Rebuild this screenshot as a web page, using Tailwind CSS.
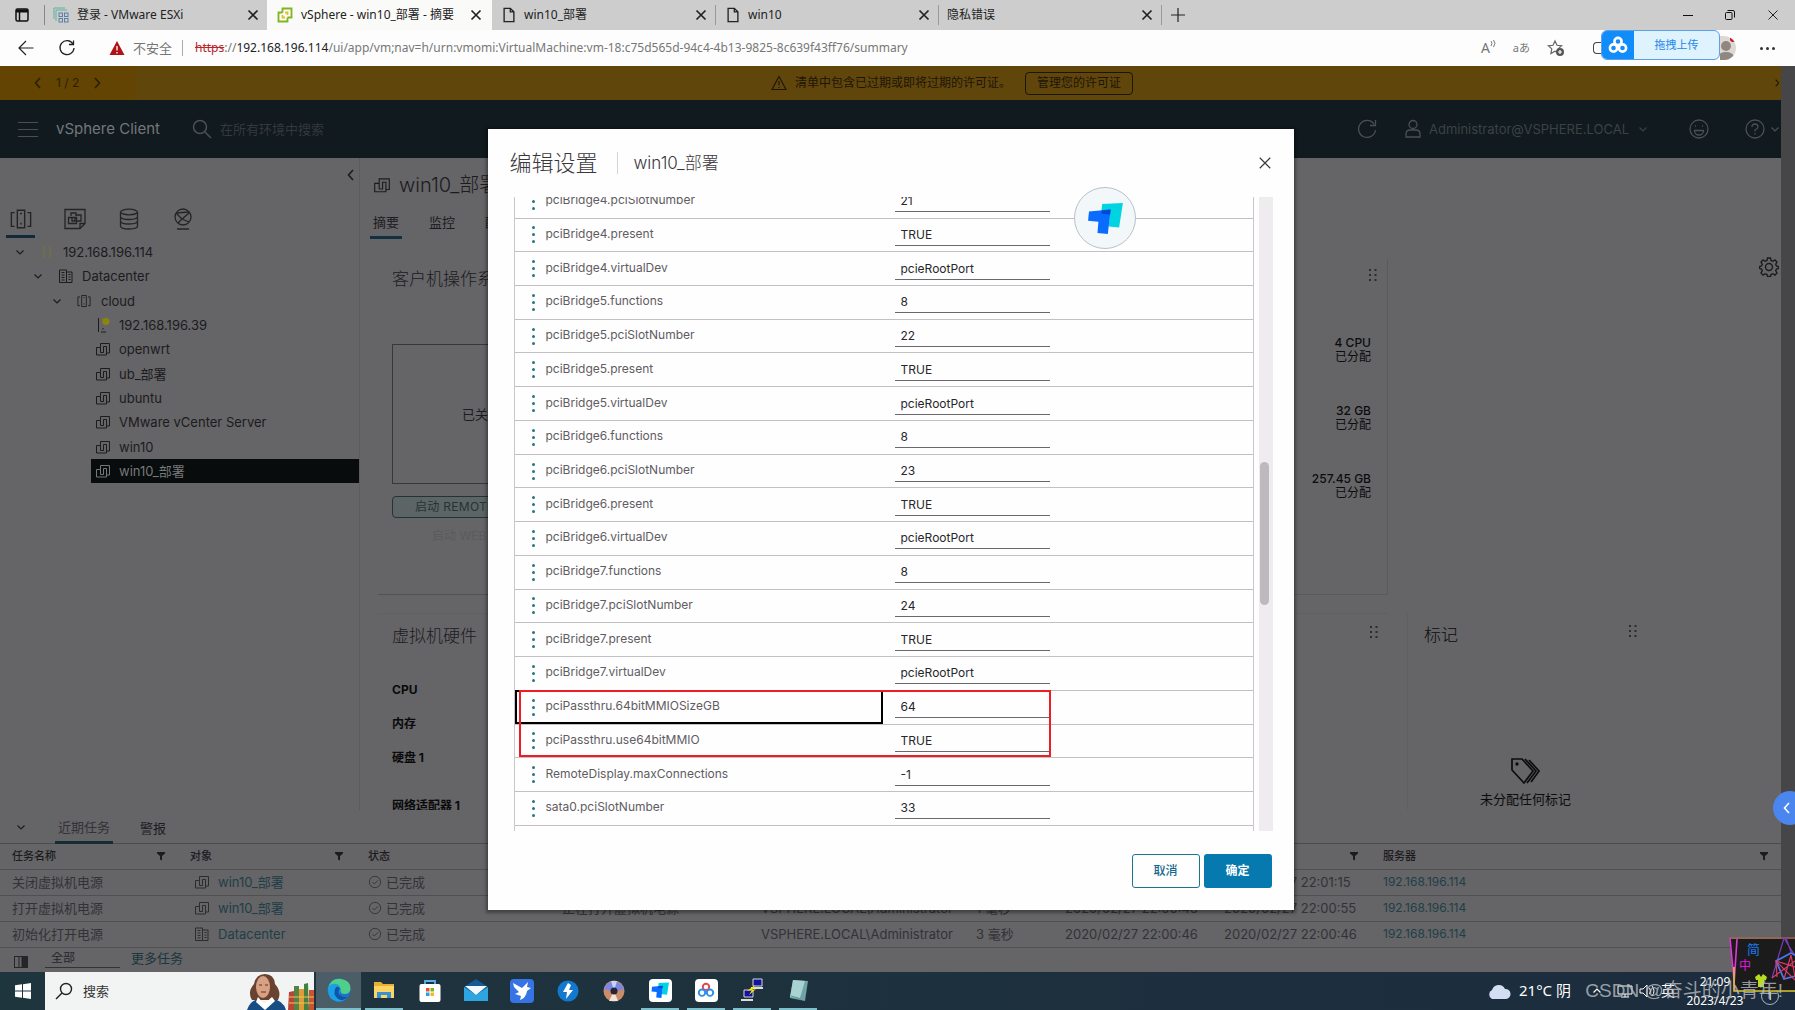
<!DOCTYPE html>
<html lang="zh-CN">
<head>
<meta charset="utf-8">
<title>vSphere - win10_部署 - 摘要</title>
<script src="https://cdn.jsdelivr.net/npm/@tailwindcss/browser@4"></script>
</head>
<body class="relative flex h-screen flex-col overflow-hidden bg-[#656467] font-['Inter','Noto_Sans_CJK_SC',sans-serif] text-[13px] leading-5 text-[#1c1b1e]">
<svg class="hidden" aria-hidden="true">
  <symbol id="vm" viewBox="0 0 16 16" fill="none" stroke="currentColor" stroke-width="1"><path d="M5.500 6.500V2.500h9v9.500h-3M5.500 6.500h-4v7.500h10V5.500H8.500v6h-3M5.500 6.500v5"/></symbol>
  <symbol id="dc" viewBox="0 0 16 16" fill="none" stroke="currentColor" stroke-width="1"><path d="M1.500 2h7v12.500h-7zM8.500 4H14v10.500H8.500M3.500 4.500h3M3.500 7h3M3.500 9.500h3M3.500 12h3M10.500 6.500h2M10.500 9h2M10.500 11.500h2"/></symbol>
  <symbol id="cluster" viewBox="0 0 24 24" fill="none" stroke="currentColor" stroke-width="1.5"><path d="M8 2.500h8v19H8zM5 5H1.500v15H5M19 5h3.500v15H19M11 6h2M12 16v2"/></symbol>
  <symbol id="chev" viewBox="0 0 12 12" fill="none" stroke="currentColor" stroke-width="1.2"><path d="M2.500 4.500L6 8l3.500-3.500"/></symbol>
  <symbol id="chevl" viewBox="0 0 12 12" fill="none" stroke="currentColor" stroke-width="1.6"><path d="M8 1L3.500 6 8 11"/></symbol>
  <symbol id="chevr" viewBox="0 0 12 12" fill="none" stroke="currentColor" stroke-width="1.6"><path d="M4 1l4.500 5L4 11"/></symbol>
  <symbol id="x" viewBox="0 0 12 12" fill="none" stroke="currentColor"><path d="M1.500 1.500l9 9M10.500 1.500l-9 9"/></symbol>
  <symbol id="page" viewBox="0 0 14 18" fill="none" stroke="currentColor" stroke-width="1.5"><path d="M1.500 1.500h7l4 4v11h-11zM8.500 1.500v4h4"/></symbol>
  <symbol id="filter" viewBox="0 0 10 10" fill="currentColor"><path d="M1 1h8v1.500L6 5v4.500L4 8.500V5L1 2.500z"/></symbol>
  <symbol id="ok" viewBox="0 0 16 16" fill="none" stroke="currentColor"><circle cx="8" cy="8" r="6.500"/><path d="M5 8l2.300 2.300L11.500 6"/></symbol>
  <symbol id="grip" viewBox="0 0 8 12" fill="currentColor"><path d="M0 0h2v2H0zM5.500 0h2v2h-2zM0 5h2v2H0zM5.500 5h2v2h-2zM0 10h2v2H0zM5.500 10h2v2h-2z"/></symbol>
  <symbol id="cloud3" viewBox="0 0 20 18" fill="none" stroke-width="2.600"><circle cx="10" cy="5.500" r="3.600"/><circle cx="5.500" cy="12" r="3.600"/><circle cx="14.500" cy="12" r="3.600"/></symbol>
  <symbol id="todesk" viewBox="0 0 38 34"><path fill="#00d4e0" d="M16 2l22-1-4 26-11-1 1-13-9-1z"/><path fill="#0a6cff" d="M2 10l23-2-3 26-11-1 1-12-11-1z"/><path fill="#0048d8" d="M15.500 8.800L25 8l-.6 5.200-9-.8z"/></symbol>
</svg>

<!-- Browser tab strip -->
<nav aria-label="标签页" class="flex h-[30px] shrink-0 items-center bg-[#cdcdcd] font-['Noto_Sans','Noto_Sans_CJK_SC',sans-serif] text-xs text-[#222]">
  <button aria-label="标签操作" class="flex w-11 justify-center"><svg class="h-3.5 w-3.5" viewBox="0 0 14 14" fill="none" stroke="#111" stroke-width="1.500"><rect x="1" y="1" width="12" height="12" rx="1.500"/><path d="M1 3h12" stroke-width="3"/><path d="M4.500 4v9"/></svg></button>
  <div class="flex h-full w-[223px] items-center">
    <span class="h-5 w-px bg-[#888]"></span>
    <svg class="ml-2 h-4 w-4" viewBox="0 0 16 16" fill="none"><path d="M1 12V1h11M3 14V3h11" stroke="#5fb39b"/><g stroke="#5c7fa6"><rect x="6" y="6" width="3.500" height="3.500"/><rect x="11.500" y="6" width="3.500" height="3.500"/><rect x="6" y="11.500" width="3.500" height="3.500"/><rect x="11.500" y="11.500" width="3.500" height="3.500"/></g></svg>
    <a href="#" class="ml-2 flex-1 whitespace-nowrap">登录 - VMware ESXi</a>
    <button aria-label="关闭" class="mr-2"><svg class="h-3 w-3" stroke-width="1.700"><use href="#x"/></svg></button>
  </div>
  <div class="flex h-full w-[225px] items-center bg-[#fafaf9]">
    <svg class="ml-2.5 h-4 w-4" viewBox="0 0 16 16" fill="none" stroke-width="1.800"><path d="M5.500 5.500v-4h9v9h-4" stroke="#7fb51d"/><path d="M5.500 5.500h-4v9h9v-4" stroke="#7fb51d"/><path d="M5.500 8v2.500H8M8 5.500h2.500V8" stroke="#e4bd2c"/></svg>
    <a href="#" aria-current="page" class="ml-2 flex-1 whitespace-nowrap">vSphere - win10_部署 - 摘要</a>
    <button aria-label="关闭" class="mr-2.5"><svg class="h-3 w-3" stroke-width="1.700"><use href="#x"/></svg></button>
  </div>
  <div class="flex h-full w-[223px] items-center">
    <svg class="ml-2.5 h-4 w-3.5"><use href="#page"/></svg>
    <a href="#" class="ml-2 flex-1 whitespace-nowrap">win10_部署</a>
    <button aria-label="关闭" class="mr-2"><svg class="h-3 w-3" stroke-width="1.700"><use href="#x"/></svg></button>
  </div>
  <div class="flex h-full w-[223px] items-center">
    <span class="h-5 w-px bg-[#999]"></span>
    <svg class="ml-2.5 h-4 w-3.5"><use href="#page"/></svg>
    <a href="#" class="ml-2 flex-1 whitespace-nowrap">win10</a>
    <button aria-label="关闭" class="mr-2"><svg class="h-3 w-3" stroke-width="1.700"><use href="#x"/></svg></button>
  </div>
  <div class="flex h-full w-[223px] items-center">
    <span class="h-5 w-px bg-[#999]"></span>
    <a href="#" class="ml-2 flex-1 whitespace-nowrap">隐私错误</a>
    <button aria-label="关闭" class="mr-2"><svg class="h-3 w-3" stroke-width="1.700"><use href="#x"/></svg></button>
  </div>
  <span class="h-5 w-px bg-[#999]"></span>
  <button aria-label="新建标签页" class="ml-2"><svg class="h-4 w-4" viewBox="0 0 16 16" stroke="#222" stroke-width="1.200"><path d="M8 1v14M1 8h14"/></svg></button>
  <div class="ml-auto flex items-center gap-8 pr-4">
    <button aria-label="最小化"><svg class="h-2.5 w-2.5" viewBox="0 0 10 10" stroke="#111"><path d="M0 5.500h10"/></svg></button>
    <button aria-label="还原"><svg class="h-2.5 w-2.5" viewBox="0 0 10 10" fill="none" stroke="#111"><rect x=".5" y="2.500" width="6.500" height="7" rx="1"/><path d="M2.500 .5H8Q9.500 .5 9.500 2v5.500"/></svg></button>
    <button aria-label="关闭窗口"><svg class="h-3 w-3"><use href="#x"/></svg></button>
  </div>
</nav>

<!-- Address bar -->
<div class="flex h-9 shrink-0 items-center bg-[#fdfdfd] font-['Noto_Sans','Noto_Sans_CJK_SC',sans-serif] text-[#777]">
  <button aria-label="返回" class="ml-[18px]"><svg class="h-4 w-4" viewBox="0 0 16 16" fill="none" stroke="#222" stroke-width="1.200"><path d="M15.500 8H1M8 1L1 8l7 7"/></svg></button>
  <button aria-label="刷新" class="ml-6"><svg class="h-[18px] w-[18px]" viewBox="0 0 18 18" fill="none" stroke="#222" stroke-width="1.300"><path d="M15 5A7 7 0 1 0 16 9M15.500 1.500V5.500H11"/></svg></button>
  <svg class="ml-[33px] h-4 w-4" viewBox="0 0 16 16"><path d="M8 1L15.500 15H.5z" fill="#b01216"/><path d="M8 6v4.500M8 12v1.500" stroke="#fff" stroke-width="1.300"/></svg>
  <span class="ml-2">不安全</span>
  <span class="ml-2.5 h-4 w-px bg-[#aaa]"></span>
  <div role="textbox" aria-label="地址" class="ml-3 flex-1 text-xs whitespace-nowrap"><span class="text-[#b8262b] line-through">https</span>://<span class="text-[#222]">192.168.196.114</span>/ui/app/vm;nav=h/urn:vmomi:VirtualMachine:vm-18:c75d565d-94c4-4b13-9825-8c639f43ff76/summary</div>
  <div class="flex items-center gap-[17px]">
    <button aria-label="大声朗读" class="flex items-start text-sm leading-4">A<svg class="h-2 w-1.5" viewBox="0 0 6 8" fill="none" stroke="#777"><path d="M1 1q2 2 0 5M3.500 0q3 3 0 7"/></svg></button>
    <button class="text-[11px]">aあ</button>
    <button aria-label="收藏"><svg class="h-[18px] w-[18px]" viewBox="0 0 18 18" fill="none" stroke="#666" stroke-width="1.200"><path d="M8 2l2 4.300 4.600.5-3.400 3.100.9 4.600L8 12.200 3.900 14.500l.9-4.600L1.400 6.800 6 6.300z"/><circle cx="13" cy="13" r="4" fill="#555" stroke="none"/><path d="M13 11v4M11 13h4" stroke="#fff"/></svg></button>
  </div>
  <div class="ml-7 flex items-center">
    <span class="h-3 w-2 rounded-l border border-r-0 border-[#444]"></span>
    <button class="-mt-1.5 flex h-[30px] overflow-hidden rounded-md border border-[#5f9ee8] bg-[#def3fd] text-[11px] text-[#1f87e6]">
      <span class="flex h-full w-8 items-center justify-center bg-[#108cfb]"><svg class="h-[18px] w-5" stroke="#fff"><use href="#cloud3"/></svg></span>
      <span class="flex h-full w-[85px] items-center justify-center">拖拽上传</span>
    </button>
    <span class="relative h-6 w-4 overflow-hidden rounded-r-xl bg-[#ddd8d3]"><svg class="h-6 w-4" viewBox="0 0 16 24" fill="#8f8780"><circle cx="6" cy="10" r="5"/><ellipse cx="6" cy="21" rx="8" ry="5"/></svg><i class="absolute top-0 right-0 h-1.5 w-1.5 rounded-full bg-[#c8102e]"></i></span>
  </div>
  <button aria-label="更多" class="mr-5 ml-6 flex gap-[3px]"><i class="h-[3px] w-[3px] rounded-full bg-[#333]"></i><i class="h-[3px] w-[3px] rounded-full bg-[#333]"></i><i class="h-[3px] w-[3px] rounded-full bg-[#333]"></i></button>
</div>

<!-- vSphere client -->
<div class="relative flex min-h-0 flex-1 border-r-[14px] border-[#464547]">
  <div class="flex min-w-0 flex-1 flex-col">
    <div class="flex h-[34px] shrink-0 items-center bg-[#61460c] text-xs text-[#1d1505]">
      <div class="flex w-[135px] items-center gap-3 self-stretch bg-[#634402] pl-8 text-[#2c1f05]"><svg class="h-3 w-3"><use href="#chevl"/></svg>1 / 2<svg class="h-3 w-3"><use href="#chevr"/></svg></div>
      <div class="flex flex-1 items-center justify-center pr-1">
        <svg class="h-4 w-4" viewBox="0 0 16 16" fill="none" stroke="currentColor" stroke-width="1.100"><path d="M8 1.500L15 14.500H1zM8 6v4.500M8 12v1"/></svg>
        <span class="ml-2">清单中包含已过期或即将过期的许可证。</span>
        <button class="ml-3.5 h-[23px] rounded-sm border border-[#1d1505] px-[11px]">管理您的许可证</button>
      </div>
      <svg class="h-3 w-2"><use href="#chevr"/></svg>
    </div>
    <header class="flex h-[58px] shrink-0 items-center bg-[#101a1f] text-[#4c5053]">
      <button aria-label="菜单" class="ml-[18px] flex flex-col gap-1.5"><i class="h-px w-5 bg-[#4b4f52]"></i><i class="h-px w-5 bg-[#4b4f52]"></i><i class="h-px w-5 bg-[#4b4f52]"></i></button>
      <span class="ml-[18px] text-[15px] text-[#74777a]">vSphere Client</span>
      <svg class="ml-8 h-5 w-5" viewBox="0 0 20 20" fill="none" stroke="currentColor" stroke-width="1.500"><circle cx="8" cy="8" r="6.500"/><path d="M13 13l6 6"/></svg>
      <input aria-label="搜索" placeholder="在所有环境中搜索" class="ml-2 w-40 bg-transparent text-[13px] placeholder:text-[#34393c]">
      <div class="ml-auto flex items-center">
        <button aria-label="刷新"><svg class="h-5 w-5" viewBox="0 0 20 20" fill="none" stroke="currentColor" stroke-width="1.300"><path d="M17 5a8.500 8.500 0 1 0 1.500 6M18.500 1v5.500H13"/></svg></button>
        <svg class="ml-7 h-5 w-4" viewBox="0 0 16 20" fill="none" stroke="currentColor" stroke-width="1.300"><circle cx="8" cy="5.500" r="4"/><path d="M1 18v-3q0-4 4-4h6q4 0 4 4v3z"/></svg>
        <button class="ml-2 flex items-center gap-2 text-[#3d4245]">Administrator@VSPHERE.LOCAL<svg class="h-3 w-3"><use href="#chev"/></svg></button>
        <button aria-label="反馈" class="ml-10"><svg class="h-5 w-5" viewBox="0 0 20 20" fill="none" stroke="currentColor" stroke-width="1.300"><circle cx="10" cy="10" r="9"/><path d="M6 7h1M13 7h1M5.500 11.500h9a4.500 4.500 0 0 1-9 0z"/></svg></button>
        <button aria-label="帮助" class="ml-9 flex items-center gap-1"><svg class="h-5 w-5" viewBox="0 0 20 20" fill="none" stroke="currentColor" stroke-width="1.300"><circle cx="10" cy="10" r="9"/><path d="M7 8q0-3 3-3t3 3q0 1.500-3 3v1.500M10 14v1.500"/></svg><svg class="h-3 w-3"><use href="#chev"/></svg></button>
      </div>
    </header>

    <div class="flex min-h-0 flex-1">
      <!-- Inventory -->
      <aside class="w-[360px] shrink-0 border-r border-[#5c5b5e]">
        <div class="flex h-11 justify-end pt-[11px] pr-0.5"><button aria-label="折叠" class="h-3"><svg class="h-3 w-3"><use href="#chevl"/></svg></button></div>
        <div class="flex h-9 gap-[25px] pl-1.5 text-[#242326]">
          <button aria-label="主机和集群" class="flex w-[29px] justify-center border-b-[3px] border-[#13293a] pt-1.5"><svg class="h-[22px] w-[22px]"><use href="#cluster"/></svg></button>
          <button aria-label="虚拟机" class="flex w-[29px] justify-center pt-1.5"><svg class="h-[22px] w-[22px]" viewBox="0 0 22 22" fill="none" stroke="currentColor" stroke-width="1.300"><path d="M1 1.500h20v14l-5 5H1zM21 15.500h-5v5M7 8V5h5v3M12 7h5v6h-4M4.500 9.500h8v6h-8zM8 9v4h3V9"/></svg></button>
          <button aria-label="存储" class="flex w-[29px] justify-center pt-1.5"><svg class="h-[22px] w-5" viewBox="0 0 20 22" fill="none" stroke="currentColor" stroke-width="1.300"><ellipse cx="10" cy="4" rx="8.500" ry="2.800"/><path d="M1.500 4v14q0 3 8.500 3t8.500-3V4M1.500 8.500q0 3 8.500 3t8.500-3M1.500 13q0 3 8.500 3t8.500-3"/></svg></button>
          <button aria-label="网络" class="flex w-[29px] justify-center pt-1.5"><svg class="h-[22px] w-5" viewBox="0 0 20 22" fill="none" stroke="currentColor" stroke-width="1.300"><circle cx="10" cy="9" r="8"/><path d="M3 5l6 6 7-6M9 11l-4 4M9 11l7 3M3 5l13-1M4 21h12"/></svg></button>
        </div>
        <ul class="mt-0.5 grid h-[243px] auto-rows-fr text-[13px]">
          <li class="flex items-center pl-3.5"><svg class="h-3 w-3"><use href="#chev"/></svg><i class="ml-[17px] h-3 w-2 border-x-2 border-[#6f6d4c]"></i><a href="#" class="ml-3">192.168.196.114</a></li>
          <li class="flex items-center pl-8"><svg class="h-3 w-3"><use href="#chev"/></svg><svg class="mr-2 ml-3.5 h-4 w-4"><use href="#dc"/></svg><a href="#">Datacenter</a></li>
          <li class="flex items-center pl-[51px]"><svg class="h-3 w-3"><use href="#chev"/></svg><svg class="mr-2.5 ml-3.5 h-3.5 w-3.5"><use href="#cluster"/></svg><a href="#">cloud</a></li>
          <li class="flex items-center pl-[95px]"><svg class="mr-2 h-4 w-4" viewBox="0 0 16 16" fill="none" stroke="currentColor"><path d="M3.500 1v14M6 15h5M8 11v1.500"/><path d="M7 1h4v6H7z" fill="#7a7318" stroke="none"/><circle cx="11" cy="4.500" r="3.500" fill="#8a8315" stroke="none"/></svg><a href="#">192.168.196.39</a></li>
          <li class="flex items-center pl-[95px]"><svg class="mr-2 h-4 w-4"><use href="#vm"/></svg><a href="#">openwrt</a></li>
          <li class="flex items-center pl-[95px]"><svg class="mr-2 h-4 w-4"><use href="#vm"/></svg><a href="#">ub_部署</a></li>
          <li class="flex items-center pl-[95px]"><svg class="mr-2 h-4 w-4"><use href="#vm"/></svg><a href="#">ubuntu</a></li>
          <li class="flex items-center pl-[95px]"><svg class="mr-2 h-4 w-4"><use href="#vm"/></svg><a href="#">VMware vCenter Server</a></li>
          <li class="flex items-center pl-[95px]"><svg class="mr-2 h-4 w-4"><use href="#vm"/></svg><a href="#">win10</a></li>
          <li class="ml-[91px] flex items-center bg-[#080c0d] pl-1 text-[#77787a]"><svg class="mr-2 h-4 w-4"><use href="#vm"/></svg><a href="#">win10_部署</a></li>
        </ul>
      </aside>

      <!-- VM summary -->
      <main class="min-w-0 flex-1 overflow-hidden pl-2.5">
        <h1 class="flex items-center pt-[11px] pl-[3px] text-xl leading-8 font-light"><svg class="mr-2 h-[18px] w-[18px]"><use href="#vm"/></svg>win10_部署</h1>
        <nav class="flex h-[38px] items-end">
          <a href="#" class="border-b-[3px] border-[#12303f] px-[3px] pb-1">摘要</a>
          <a href="#" class="ml-6 px-[3px] pb-[7px]">监控</a>
          <a href="#" class="ml-6 px-[3px] pb-[7px]">配置</a>
        </nav>
        <div class="flex justify-end pt-[18px] pr-0.5"><button aria-label="设置"><svg class="h-5 w-5" viewBox="0 0 20 20" fill="none" stroke="currentColor" stroke-width="1.400"><circle cx="10" cy="10" r="3.500"/><path d="M8.500 1h3l.5 2.500 1.800.8L16 3l2 2-1.300 2.200.8 1.800 2 .5v2l-2 .5-.8 1.800L18 16l-2 2-2.200-1.300-1.800.8-.5 2h-3l-.5-2-1.800-.8L4 18l-2-2 1.300-2.200-.8-1.800-2-.5v-2l2-.5.8-1.800L2 5l2-2 2.200 1.300L8 3.500z"/></svg></button></div>
        <div class="-mt-[18px] grid grid-cols-[minmax(0,1fr)_240px] gap-x-[19px] gap-y-[18px] pr-[134px] pl-2">
          <div class="grid h-[336px] grid-cols-2 gap-5">
            <section class="border-b border-[#525153] px-3.5 pt-2">
              <h2 class="text-[17px] leading-6 font-light">客户机操作系统</h2>
              <div class="mt-[53px] flex h-[140px] items-center border border-[#38373a] pl-[69px]">已关闭电源</div>
              <button class="mt-3 h-[22px] rounded-sm border border-[#213537] bg-[#5d6465] px-[22px] text-xs tracking-wide text-[#213537]">启动 REMOTE CONSOLE</button>
              <p class="mt-2.5 pl-10 text-xs text-[#5b5b5d]">启动 WEB CONSOLE</p>
            </section>
            <section class="border-r border-b border-[#5a595b] pt-2.5 pr-2.5 text-right text-[#0c0c0d]">
              <svg class="ml-auto h-3 w-2 text-[#2c2b2e]"><use href="#grip"/></svg>
              <dl class="pt-[55px] pr-1.5 text-xs leading-[14px]">
                <div class="mb-10"><dt class="font-medium">4 CPU</dt><dd>已分配</dd></div>
                <div class="mb-10"><dt class="font-medium">32 GB</dt><dd>已分配</dd></div>
                <div><dt class="font-medium">257.45 GB</dt><dd>已分配</dd></div>
              </dl>
            </section>
          </div>
          <div></div>
          <section class="h-[200px] border-t border-[#606063] pt-2.5 pr-2.5 pl-3.5">
            <div class="flex justify-between"><h2 class="text-[17px] leading-6 font-light">虚拟机硬件</h2><svg class="mt-0.5 h-3 w-2 text-[#2c2b2e]"><use href="#grip"/></svg></div>
            <ul class="mt-[35px] text-xs leading-[14px] font-bold text-[#0a0a0b]"><li class="mb-5">CPU</li><li class="mb-5">内存</li><li class="mb-[34px]">硬盘 1</li><li>网络适配器 1</li></ul>
          </section>
          <section class="h-[200px] border-l border-[#606063] pt-2.5 pr-2.5 pl-4 text-[#0c0c0d]">
            <div class="flex justify-between"><h2 class="text-[17px] leading-6 font-light">标记</h2><svg class="mt-0.5 h-3 w-2 text-[#2c2b2e]"><use href="#grip"/></svg></div>
            <div class="mt-[110px] mr-2.5 flex flex-col items-center gap-1"><svg class="h-7 w-8" viewBox="0 0 32 28" fill="none" stroke="currentColor" stroke-width="1.700"><path d="M2 2h10l11 12-9 12L2 13zM15 2l11 12-9 12M19 3l10 11-8 11"/><circle cx="7" cy="7" r=".8"/></svg>未分配任何标记</div>
          </section>
        </div>
      </main>
    </div>

    <!-- Recent tasks -->
    <section class="h-[162px] shrink-0 bg-[#656467]">
      <div class="flex h-[34px] items-center border-b border-[#4b4a4c] pl-[15px]">
        <button aria-label="收起"><svg class="h-3 w-3" stroke-width="1.800"><use href="#chev"/></svg></button>
        <button class="ml-7 h-[34px] border-b-[3px] border-[#152c35] px-[3px] pt-1 text-[#333236]">近期任务</button>
        <button class="ml-[27px] pt-0.5">警报</button>
      </div>
      <table class="w-full table-fixed text-left text-[13px] text-[#333236]">
        <colgroup><col class="w-[178px]"><col class="w-[178px]"><col class="w-[194px]"><col class="w-[199px]"><col class="w-[215px]"><col class="w-[89px]"><col class="w-[159px]"><col class="w-[159px]"><col></colgroup>
        <thead class="text-[11px] text-[#1c1b1e]"><tr id="task-head" class="h-[25px] border-b border-[#504f52]"></tr></thead>
        <tbody id="tasks"></tbody>
      </table>
      <div class="flex items-start pt-px pl-3.5 text-[#26252a]">
        <svg class="mt-1.5 h-3.5 w-3.5" viewBox="0 0 14 14" fill="none" stroke="currentColor"><rect x=".5" y="1.500" width="13" height="11"/><path d="M5 1.500v11"/><path d="M8 2h5v10H8z" fill="currentColor"/></svg>
        <select aria-label="任务范围" class="ml-[17px] h-[19px] w-[75px] appearance-none border-b border-[#333] pl-1.5 text-xs leading-3"><option>全部</option></select>
        <a href="#" class="ml-[11px] leading-[18px] text-[#1a373d]">更多任务</a>
      </div>
    </section>
  </div>
</div>

<!-- Taskbar -->
<footer class="relative flex h-[38px] shrink-0 items-stretch bg-linear-to-r from-[#1f353d] to-[#1c2c3e] font-['Noto_Sans','Noto_Sans_CJK_SC',sans-serif] text-white">
  <button aria-label="开始" class="flex w-[45px] items-center justify-center"><svg class="h-4 w-4" viewBox="0 0 16 16" fill="#fff"><path d="M0 2.300l7-1v6.200H0zM8 1.200L16 0v7.500H8zM0 8.500h7v6.200l-7-1zM8 8.500h8V16l-8-1.200z"/></svg></button>
  <label class="flex w-[269px] items-center overflow-hidden bg-[#f2f3f3] pl-2.5">
    <svg class="h-[18px] w-[18px] shrink-0" viewBox="0 0 18 18" fill="none" stroke="#222" stroke-width="1.400"><circle cx="11" cy="7" r="5.500"/><path d="M7 11l-6 6"/></svg>
    <input type="search" placeholder="搜索" class="ml-2 min-w-0 flex-1 bg-transparent pl-0.5 placeholder:text-[#333]">
    <svg class="h-[38px] w-[68px] shrink-0" viewBox="0 0 68 38"><path d="M8 12Q10 2 19 2t10 10q7 8 3 16H6Q1 20 8 12z" fill="#694230"/><ellipse cx="17" cy="15" rx="7" ry="11" fill="#d9a184"/><path d="M13 13h3M19 13h3M15 20h5" stroke="#5d3526"/><path d="M1 38q3-10 12-11l5 6 8-6q11 1 14 11z" fill="#164d84"/><path d="M12 25l6 7 8-7 3 4-10 9-9-8z" fill="#fff"/><path d="M43 20l5-1 1 19h-7z" fill="#ba4435"/><path d="M48 14h5v24h-5z" fill="#538446"/><path d="M53 17h5v21h-5z" fill="#e09b39"/><path d="M58 12l4-1 1 27h-5z" fill="#46803e"/><path d="M63 18h5v20h-5z" fill="#cb5430"/><path d="M43 25h25M43 31h25" stroke="#f0c25a"/></svg>
  </label>
  <div class="ml-0.5 flex">
    <button aria-label="Edge" class="flex w-[45px] items-center justify-center border-b-2 border-[#7dc0cc] bg-[#4b5d67]"><svg class="h-6 w-6" viewBox="0 0 24 24"><circle cx="12" cy="12" r="11.500" fill="#1b74c9"/><path d="M1 10Q4 0 13 .7 24 2 23.500 11q-.5 5-6 5-4 0-4-3 1-5-5-5.500Q4 7 1 10z" fill="#4fd08a"/><path d="M1 10Q4 5 9 6q5 1 4 6-2 4 2 7 3 2 6-.5-4 6-11 5Q0 21 1 10z" fill="#1c9fe3"/><path d="M9 9q-4 7 2 12 5 3 10-2-5 1-8-2-3-3 0-6-1-3-4-2z" fill="#0d55a8"/></svg></button>
    <button aria-label="文件资源管理器" class="mx-1 flex w-[38px] items-center justify-center border-b-2 border-[#7dc0cc]"><svg class="h-5 w-5" viewBox="0 0 20 20"><path d="M0 2h7l2 2h11v14H0z" fill="#e8b230"/><path d="M0 6h20v12H0z" fill="#fbd667"/><path d="M3 18v-6h14v6h-4v-3H7v3z" fill="#3b90d4"/></svg></button>
    <button aria-label="Microsoft Store" class="mx-1 flex w-[38px] items-center justify-center"><svg class="h-6 w-6" viewBox="0 0 24 24"><path d="M7 6V2h10v4" fill="none" stroke="#54b5e8" stroke-width="1.800"/><rect x="1.500" y="5" width="21" height="18" rx="2" fill="#fff"/><path d="M8 9h3.500v3.500H8z" fill="#e8502d"/><path d="M12.500 9H16v3.500h-3.500z" fill="#78b526"/><path d="M8 13.500h3.500V17H8z" fill="#27a2e3"/><path d="M12.500 13.500H16V17h-3.500z" fill="#f4ba24"/></svg></button>
    <button aria-label="邮件" class="mx-1 flex w-[38px] items-center justify-center"><svg class="h-6 w-6" viewBox="0 0 24 24"><path d="M0 8l12-8 12 8v14H0z" fill="#155a96"/><path d="M0 8l12 8L24 8v14H0z" fill="#2da5e1"/><path d="M1 7h22l-11 9z" fill="#f2f8fc"/></svg></button>
    <button aria-label="雷鸟" class="mx-1 flex w-[38px] items-center justify-center"><svg class="h-6 w-6" viewBox="0 0 24 24"><rect width="24" height="24" rx="4" fill="#3674e6"/><path d="M3 4l9 5 6-6-1 5 4 1-4 3q-1 7-7 9l1-4-6-2 4-2-5-5z" fill="#fff"/></svg></button>
    <button aria-label="闪电" class="mx-1 flex w-[38px] items-center justify-center"><svg class="h-[22px] w-[22px]" viewBox="0 0 22 22"><circle cx="11" cy="11" r="10.500" fill="#1378cf"/><path d="M11 3L6 12h4l-1 7 7-9h-4l2-5z" fill="#fff"/></svg></button>
    <button aria-label="浏览器" class="mx-1 flex w-[38px] items-center justify-center"><svg class="h-[22px] w-[22px]" viewBox="0 0 22 22"><circle cx="11" cy="11" r="10.500" fill="#c98d67"/><path d="M1 9a10.500 10.500 0 0 1 20 0l-10 3z" fill="#7b86e5"/><path d="M8 1h6l-3 10z" fill="#c7d3fb"/><path d="M11 11l-5 10h9z" fill="#f2e4dc"/><circle cx="11" cy="11" r="3.500" fill="#2a2430"/></svg></button>
    <button aria-label="ToDesk" class="mx-1 flex w-[38px] items-center justify-center border-b-2 border-[#7dc0cc]"><span class="flex h-[23px] w-[23px] items-center justify-center rounded bg-white"><svg class="h-4 w-[18px]"><use href="#todesk"/></svg></span></button>
    <button aria-label="百度网盘" class="mx-1 flex w-[38px] items-center justify-center border-b-2 border-[#7dc0cc]"><span class="flex h-[23px] w-[23px] items-center justify-center rounded bg-white"><svg class="h-4 w-[18px]" viewBox="0 0 20 18" fill="none" stroke-width="2.200"><circle cx="10" cy="5.500" r="3.600" stroke="#e2474e"/><circle cx="5.500" cy="12" r="3.600" stroke="#2c8ff0"/><circle cx="14.500" cy="12" r="3.600" stroke="#2c8ff0"/></svg></span></button>
    <button aria-label="PuTTY" class="mx-1 flex w-[38px] items-center justify-center border-b-2 border-[#7dc0cc]"><svg class="h-6 w-6" viewBox="0 0 24 24"><path d="M13 1h9v7h-9zM4 12h9v7H4z" fill="#13139b" stroke="#d8d8d8"/><path d="M11 9h12v2H11zM1 21h12v2H1z" fill="#ddd"/><path d="M15 7l-8 6 5-1-3 5 7-6-4 1z" fill="#ffe600"/></svg></button>
    <button aria-label="记事本" class="mx-1 flex w-[38px] items-center justify-center border-b-2 border-[#7dc0cc]"><svg class="h-6 w-6" viewBox="0 0 24 24"><path d="M7 2l15 1-3 20-15-3z" fill="#6fa3a5"/><path d="M7 2l12 1-5 17-10-1z" fill="#a9d2d2"/><path d="M5 18l10 3" stroke="#5d9293"/></svg></button>
  </div>
  <div class="mr-12 ml-auto flex items-center text-sm">
    <svg class="h-4 w-6" viewBox="0 0 24 16" fill="#d3def5"><path d="M5 16a5 5 0 0 1 0-9A7 7 0 0 1 18 6a5 5 0 0 1 1 10z"/></svg>
    <span class="ml-2 text-[15px] whitespace-nowrap">21°C 阴</span>
    <svg class="ml-5 h-3 w-3 rotate-180"><use href="#chev"/></svg>
    <svg class="ml-3.5 h-4 w-4" viewBox="0 0 16 16" fill="none" stroke="#fff"><path d="M1 3h14v8H1zM4 14h8M8 11v3"/></svg>
    <svg class="ml-1.5 h-4 w-4" viewBox="0 0 16 16" fill="none" stroke="#fff"><path d="M1 6h3l4-4v12l-4-4H1zM10.500 5q2 3 0 6M13 3q4 5 0 10"/></svg>
    <span class="ml-1.5">英</span>
    <time class="ml-2 w-16 text-center text-xs leading-[19px]">21:09<br>2023/4/23</time>
  </div>
  <div class="absolute top-[15px] right-4 flex h-[18px] w-[18px] items-center justify-center rounded-full border border-[#aab4bd] text-[11px]">1</div>
</footer>

<!-- Input method widget -->
<div class="absolute right-0 bottom-[18px] h-[55px] w-[66px] overflow-hidden">
  <svg class="absolute inset-0 h-[55px] w-[66px]" viewBox="0 0 66 55" fill="none" stroke-width="1.200"><path d="M1 2h65v52H5z" fill="#1b1b1c"/><path d="M1 1l65 0" stroke="#c06a4c"/><path d="M1 1l5 53M8 2L5 48" stroke="#e137d4" stroke-width="1.600"/><path d="M5 30v24h61" stroke="#d8c92e" stroke-width="1.600"/><path d="M55 1L43 41M55 1l11 18M57 1l5 14" stroke="#7b3db4"/><path d="M47 24l15-8 4 2M47 24l8 18 11-3" stroke="#4b77ee" stroke-width="1.800"/><path d="M47 24l19 6M55 42l7-24 4 22M43 41l23-17M48 40l-1-16 19 19" stroke="#d93b68"/></svg>
  <span class="absolute top-0.5 left-[18px] text-[13px] leading-5 text-[#1e7bf0]">简</span>
  <span class="absolute top-[19px] left-2.5 text-[12px] leading-5 text-[#e416e0]">中</span>
  <svg class="absolute top-9 left-6 h-4 w-4" viewBox="0 0 16 16" fill="#b6dd1f"><path d="M2 4l4-3 2 3 2-3 4 3-1 3h-2v7H5V7H3z"/></svg>
</div>
<div class="pointer-events-none absolute right-3 bottom-[5px] font-['Liberation_Sans','Noto_Sans_CJK_SC',sans-serif] text-[19px] leading-7 whitespace-nowrap text-[#b9bdc1]/80">CSDN @奋斗的小青年!</div>
<button aria-label="展开侧栏" class="absolute top-[791px] -right-3 flex h-[34px] w-[34px] items-center rounded-full bg-[#4a86ee] pl-2 text-white"><svg class="h-3 w-3"><use href="#chevl"/></svg></button>

<!-- Edit settings dialog -->
<div class="pointer-events-none absolute inset-0 flex items-start justify-center pt-[129px] pr-[14px]">
  <div role="dialog" aria-labelledby="dlg-title" class="pointer-events-auto relative flex h-[781px] w-[806px] flex-col bg-[#fefefe] shadow-[0_1px_3px_2px_rgba(0,0,0,0.35)]">
    <div class="flex h-[68px] shrink-0 items-center pr-[22px] pl-[22px] text-[#3b383d]">
      <h2 id="dlg-title" class="text-[22px] font-light">编辑设置</h2>
      <span class="ml-[19px] h-[22px] w-px bg-[#d5d3d6]"></span>
      <span class="ml-4 flex-1 text-[17px] font-light">win10_部署</span>
      <button aria-label="关闭"><svg class="h-[14px] w-[14px]"><use href="#x"/></svg></button>
    </div>
    <div class="flex h-[634px] shrink-0 pr-[21px] pl-[26px]">
      <div class="relative min-w-0 flex-1 overflow-hidden border-x border-[#c9c7cb]">
        <table class="-mt-3 h-[641px] w-full table-fixed border-collapse text-xs leading-[18px] text-[#5f5c62]">
          <colgroup><col class="w-[368px]"><col></colgroup>
          <tbody id="params"></tbody>
        </table>
      </div>
      <div class="ml-[5px] w-[14px] bg-[#eeecef] pt-[265px] pl-px"><div class="h-[143px] w-[9px] rounded-full bg-[#bcbabc]"></div></div>
    </div>
    <div class="flex justify-end gap-1 pt-[23px] pr-[22px]">
      <button class="h-[34px] w-[68px] rounded-[3px] border border-[#1b7590] text-xs font-medium text-[#14698a]">取消</button>
      <button class="h-[34px] w-[68px] rounded-[3px] bg-[#0679ae] text-xs font-bold text-white">确定</button>
    </div>
    <!-- Highlight drawn round the two MMIO settings -->
    <div class="pointer-events-none absolute top-[561px] left-[31px] h-[67px] w-[532px] border-2 border-[#ee1c25]"></div>
    <div class="absolute top-[58px] left-[586px] flex h-[62px] w-[62px] items-center justify-center rounded-full border border-[#b9c1c6] bg-[#f2f7fa]"><svg class="h-8 w-9"><use href="#todesk"/></svg></div>
  </div>
</div>

<script>
const params = [
  ['pciBridge4.pciSlotNumber', '21'], ['pciBridge4.present', 'TRUE'], ['pciBridge4.virtualDev', 'pcieRootPort'],
  ['pciBridge5.functions', '8'], ['pciBridge5.pciSlotNumber', '22'], ['pciBridge5.present', 'TRUE'], ['pciBridge5.virtualDev', 'pcieRootPort'],
  ['pciBridge6.functions', '8'], ['pciBridge6.pciSlotNumber', '23'], ['pciBridge6.present', 'TRUE'], ['pciBridge6.virtualDev', 'pcieRootPort'],
  ['pciBridge7.functions', '8'], ['pciBridge7.pciSlotNumber', '24'], ['pciBridge7.present', 'TRUE'], ['pciBridge7.virtualDev', 'pcieRootPort'],
  ['pciPassthru.64bitMMIOSizeGB', '64'], ['pciPassthru.use64bitMMIO', 'TRUE'], ['RemoteDisplay.maxConnections', '-1'], ['sata0.pciSlotNumber', '33'],
];
document.getElementById('params').innerHTML = params.map(([k, v], i) => `
  <tr class="border-b border-[#c2c0c4]">
    <td class="p-0 ${i === 15 ? 'outline-2 -outline-offset-2 outline-black' : ''}"><div class="flex items-center pl-[17px]">
      <button aria-label="操作" class="mr-[11px] flex w-[3px] flex-col gap-1"><i class="h-[3px] w-[3px] rounded-full bg-[#2a7484]"></i><i class="h-[3px] w-[3px] rounded-full bg-[#2a7484]"></i><i class="h-[3px] w-[3px] rounded-full bg-[#2a7484]"></i></button>
      <label for="p${i}" class="pb-0.5">${k}</label></div></td>
    <td class="p-0 pl-3"><input id="p${i}" value="${v}" class="block h-[22px] w-[155px] border-b border-[#6a686d] bg-transparent px-1.5 text-xs text-[#29262c]"></td>
  </tr>`).join('');

const heads = ['任务名称', '对象', '状态', '详细信息', '启动者', '排队时间', '开始时间', '完成时间', '服务器'];
const filters = [0, 1, 7, 8];
document.getElementById('task-head').innerHTML = heads.map((h, i) => `
  <th class="px-3 font-medium"><div class="flex items-center justify-between">${h}${filters.includes(i) ? '<svg class="h-2.5 w-2.5"><use href="#filter"/></svg>' : ''}</div></th>`).join('');
const tasks = [
  ['关闭虚拟机电源', 'vm', 'win10_部署', '', '2 毫秒', '2020/02/27 22:01:13', '2020/02/27 22:01:15'],
  ['打开虚拟机电源', 'vm', 'win10_部署', '正在打开虚拟机电源', '1 毫秒', '2020/02/27 22:00:46', '2020/02/27 22:00:55'],
  ['初始化打开电源', 'dc', 'Datacenter', '', '3 毫秒', '2020/02/27 22:00:46', '2020/02/27 22:00:46'],
];
document.getElementById('tasks').innerHTML = tasks.map(([n, ic, o, d, q, s, e]) => `
  <tr class="h-[26px] border-b border-[#504f52] whitespace-nowrap">
    <td class="px-3">${n}</td>
    <td class="px-4"><a href="#" class="flex items-center gap-2 text-[#203f47]"><svg class="h-4 w-4 text-[#2c2b2e]"><use href="#${ic}"/></svg>${o}</a></td>
    <td class="px-3"><div class="flex items-center gap-1"><svg class="h-3.5 w-3.5"><use href="#ok"/></svg>已完成</div></td>
    <td class="px-3">${d}</td><td class="px-3">VSPHERE.LOCAL\\Administrator</td><td class="px-3">${q}</td>
    <td class="pl-3">${s}</td><td class="pl-3">${e}</td><td class="px-3 text-xs"><a href="#" class="text-[#203f47]">192.168.196.114</a></td>
  </tr>`).join('');
</script>
</body>
</html>
